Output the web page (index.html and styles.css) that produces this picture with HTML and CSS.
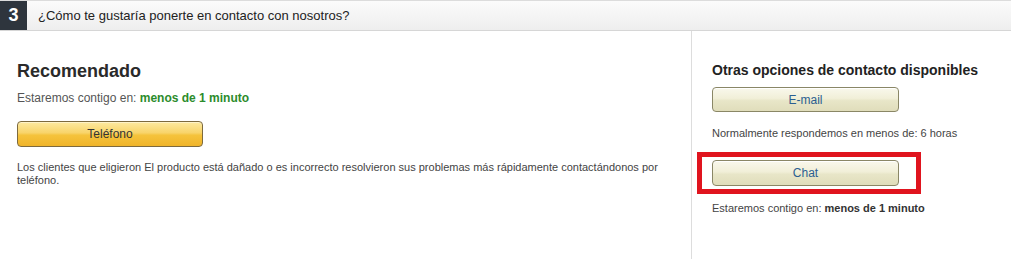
FILE: index.html
```html
<!DOCTYPE html>
<html lang="es">
<head>
<meta charset="utf-8">
<title>Contacto</title>
<link rel="stylesheet" href="styles.css">
</head>
<body>
<div class="section">
  <div class="head">
    <span class="num">3</span>
    <span class="title">¿Cómo te gustaría ponerte en contacto con nosotros?</span>
  </div>
  <div class="content">
    <div class="main">
      <h2 class="rec">Recomendado</h2>
      <div class="wait">Estaremos contigo en: <b class="green">menos de 1 minuto</b></div>
      <button class="btn btn-yellow">Teléfono</button>
      <p class="note">Los clientes que eligieron El producto está dañado o es incorrecto resolvieron sus problemas más rápidamente contactándonos por teléfono.</p>
    </div>
    <div class="side">
      <h3 class="other">Otras opciones de contacto disponibles</h3>
      <button class="btn btn-beige">E-mail</button>
      <div class="small resp">Normalmente respondemos en menos de: 6 horas</div>
      <div class="highlight">
        <button class="btn btn-beige">Chat</button>
      </div>
      <div class="small chatwait">Estaremos contigo en: <b>menos de 1 minuto</b></div>
    </div>
  </div>
</div>
</body>
</html>
```

FILE: styles.css
```css
html, body {
  margin: 0;
  padding: 0;
  background: #ffffff;
}
body {
  font-family: "Liberation Sans", Arial, sans-serif;
  color: #333333;
}
.section {
  width: 1011px;
  height: 259px;
  overflow: hidden;
}
.head {
  display: flex;
  align-items: center;
  height: 29px;
  border-top: 1px solid #dcdcdc;
  border-bottom: 1px solid #d6d6d6;
  background: linear-gradient(#fbfbfb, #eeeeee);
}
.num {
  width: 27px;
  height: 29px;
  background: #2e353d;
  color: #ffffff;
  font-weight: bold;
  font-size: 18px;
  display: flex;
  align-items: center;
  justify-content: center;
}
.title {
  margin-left: 11px;
  font-size: 13px;
  color: #222222;
}
.content {
  display: flex;
  height: 228px;
}
.main {
  box-sizing: content-box;
  width: 657px;
  padding-left: 17px;
  padding-right: 17px;
  border-right: 1px solid #dddddd;
}
.rec {
  margin: 30px 0 0;
  font-size: 18px;
  line-height: 20px;
  font-weight: bold;
  color: #2a2a2a;
}
.wait {
  margin-top: 10px;
  font-size: 12px;
  line-height: 15px;
  color: #555555;
}
.green {
  color: #2c8c2c;
}
.btn {
  display: block;
  font-family: "Liberation Sans", Arial, sans-serif;
  font-size: 12px;
  border-radius: 4px;
  padding: 0;
  cursor: pointer;
}
.btn-yellow {
  margin-top: 15px;
  width: 186px;
  height: 26px;
  color: #333333;
  border: 1px solid #7d6a3e;
  background: linear-gradient(#fde9a0 0%, #f8d46a 45%, #f5c33c 55%, #f0b42a 100%);
  box-shadow: inset 0 1px 0 #fff3c8;
}
.note {
  margin: 14px 0 0;
  font-size: 11px;
  line-height: 13px;
  color: #444444;
}
.side {
  padding-left: 20px;
}
.other {
  margin: 31px 0 0;
  font-size: 14px;
  line-height: 17px;
  font-weight: bold;
  color: #222222;
}
.btn-beige {
  width: 187px;
  height: 25px;
  color: #2b5f91;
  border: 1px solid #8a8766;
  background: linear-gradient(#f9f8ec 0%, #f1efd8 45%, #e8e6c8 55%, #e0ddbb 100%);
  box-shadow: inset 0 1px 0 #ffffff;
}
.side > .btn-beige {
  margin-top: 8px;
}
.small {
  font-size: 11px;
  line-height: 13px;
  color: #444444;
}
.resp {
  margin-top: 15px;
}
.highlight {
  margin: 12px 0 0 -15px;
  width: 187px;
  padding: 3px 17px 3px 10px;
  border: 5px solid #e0141e;
}
.highlight .btn-beige {
  height: 26px;
}
.chatwait {
  margin-top: 8px;
}
.chatwait b {
  color: #333333;
}
```
